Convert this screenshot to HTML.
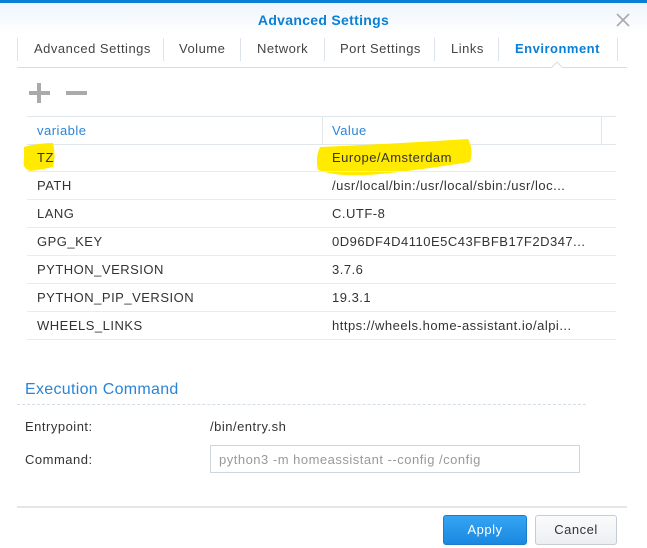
<!DOCTYPE html><html><head><style>
body{margin:0;width:647px;height:548px;background:#fff;font-family:"Liberation Sans",sans-serif;font-size:13px;letter-spacing:0.5px;color:#333;position:relative;overflow:hidden}
.a{position:absolute}
.t{position:absolute;top:39px;font-size:13px;color:#444;line-height:20px;white-space:nowrap}
.s{position:absolute;top:38px;height:23px;width:1px;background:#dde3ea}
.row{position:absolute;left:27px;width:589px;height:27px;border-bottom:1px solid #e8ecf0;line-height:28px;white-space:nowrap}
.row span{position:absolute;left:10px}.row b{font-weight:normal;position:absolute;left:305px}
</style></head><body>
<div class="a" style="left:0;top:0;width:647px;height:3px;background:#0a7fd6"></div>
<div class="a" style="left:0;top:3px;width:647px;height:32px;background:linear-gradient(#eef5fb,#fff)"></div>
<div class="a" style="left:0;top:12px;width:647px;text-align:center;font-weight:bold;font-size:14px;letter-spacing:0.3px;color:#0a7fd6">Advanced Settings</div>
<svg class="a" style="left:616px;top:13px" width="14" height="14"><path d="M1 1L13 13M13 1L1 13" stroke="#aaa" stroke-width="1.6"/></svg>
<div class="s" style="left:17px"></div><div class="s" style="left:163px"></div><div class="s" style="left:240px"></div><div class="s" style="left:324px"></div><div class="s" style="left:434px"></div><div class="s" style="left:498px"></div><div class="s" style="left:617px"></div>
<div class="t" style="left:34px">Advanced Settings</div>
<div class="t" style="left:179px">Volume</div>
<div class="t" style="left:257px">Network</div>
<div class="t" style="left:340px">Port Settings</div>
<div class="t" style="left:451px">Links</div>
<div class="t" style="left:515px;font-weight:bold;color:#0a7fd6">Environment</div>
<div class="a" style="left:17px;top:67px;width:610px;height:1px;background:#d8dde3"></div>
<div class="a" style="left:553px;top:63px;width:7px;height:7px;background:#fff;border-left:1px solid #d8dde3;border-top:1px solid #d8dde3;transform:rotate(45deg)"></div>
<div class="a" style="left:29px;top:91px;width:21px;height:4px;background:#aaa"></div>
<div class="a" style="left:37px;top:83px;width:4px;height:20px;background:#aaa"></div>
<div class="a" style="left:66px;top:91px;width:21px;height:4px;background:#aaa"></div>
<div class="a" style="left:27px;top:116px;width:589px;height:27px;border-top:1px solid #e1e6eb;border-bottom:1px solid #e1e6eb"></div>
<div class="a" style="left:322px;top:117px;width:1px;height:27px;background:#e1e6eb"></div>
<div class="a" style="left:601px;top:117px;width:1px;height:27px;background:#e1e6eb"></div>
<div class="a" style="left:37px;top:123px;color:#2a85d6">variable</div>
<div class="a" style="left:332px;top:123px;color:#2a85d6">Value</div>
<svg class="a" style="left:0;top:0" width="647" height="548"><path d="M24 147 Q38 143 53 143 Q56 156 53 167 Q40 170 30 171 Q22 168 24 160Z" fill="#ffea00"/><path d="M320 147 Q390 144 468 139 Q474 150 470 162 Q420 170 380 174 Q340 178 318 170 Q315 158 320 147Z" fill="#ffea00"/></svg>
<div class="row" style="top:144px"><span>TZ</span><b>Europe/Amsterdam</b></div>
<div class="row" style="top:172px"><span>PATH</span><b>/usr/local/bin:/usr/local/sbin:/usr/loc...</b></div>
<div class="row" style="top:200px"><span>LANG</span><b>C.UTF-8</b></div>
<div class="row" style="top:228px"><span>GPG_KEY</span><b>0D96DF4D4110E5C43FBFB17F2D347...</b></div>
<div class="row" style="top:256px"><span>PYTHON_VERSION</span><b>3.7.6</b></div>
<div class="row" style="top:284px"><span>PYTHON_PIP_VERSION</span><b>19.3.1</b></div>
<div class="row" style="top:312px"><span>WHEELS_LINKS</span><b>https://wheels.home-assistant.io/alpi...</b></div>
<div class="a" style="left:25px;top:381px;font-size:16px;letter-spacing:0.3px;color:#2a85d6">Execution Command</div>
<div class="a" style="left:17px;top:404px;width:569px;border-top:1px dashed #d5dde6"></div>
<div class="a" style="left:25px;top:419px">Entrypoint:</div>
<div class="a" style="left:210px;top:419px">/bin/entry.sh</div>
<div class="a" style="left:25px;top:452px">Command:</div>
<div class="a" style="left:210px;top:445px;width:368px;height:26px;border:1px solid #cfd6dd;color:#999;line-height:27px;text-indent:8px;white-space:nowrap">python3 -m homeassistant --config /config</div>
<div class="a" style="left:17px;top:506px;width:610px;height:2px;background:#e4e7ea"></div>
<div class="a" style="left:443px;top:515px;width:82px;height:28px;border-radius:3px;background:linear-gradient(#35a5f3,#1a88e0);border:1px solid #1a7ccc;color:#fff;text-align:center;line-height:28px">Apply</div>
<div class="a" style="left:535px;top:515px;width:80px;height:28px;border-radius:3px;background:linear-gradient(#fafbfc,#eceff2);border:1px solid #c5ccd3;text-align:center;line-height:28px">Cancel</div>
</body></html>
